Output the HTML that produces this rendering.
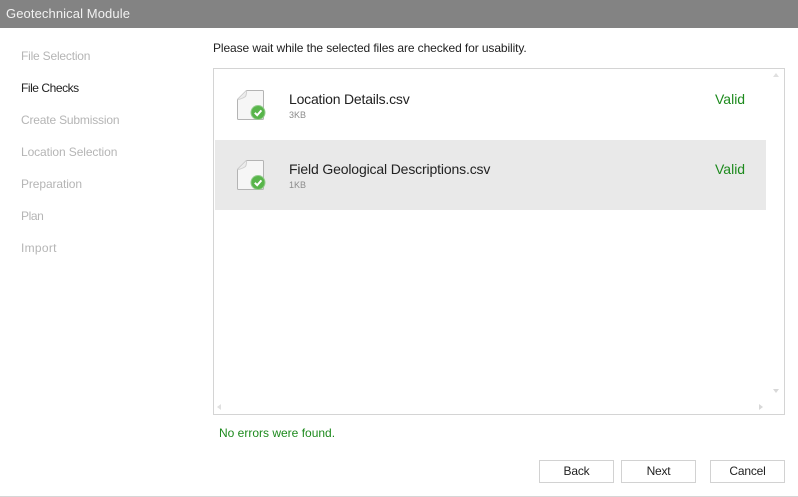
<!DOCTYPE html>
<html>
<head>
<meta charset="utf-8">
<style>
html,body{margin:0;padding:0;background:#fff;}
body{width:798px;height:497px;position:relative;overflow:hidden;font-family:"Liberation Sans",sans-serif;}
.t{position:absolute;white-space:nowrap;line-height:16px;}
.nav{left:21px;font-size:12px;color:#b5b5b5;}
.btn{position:absolute;top:460px;height:23px;box-sizing:border-box;border:1px solid #d2d2d2;background:#fff;text-align:center;font-size:12px;line-height:21px;color:#222;letter-spacing:-0.2px;}
.abs{position:absolute;}
</style>
</head>
<body>
<div class="abs" style="left:0;top:0;width:798px;height:28px;background:#838383"></div>
<div class="t" style="left:6px;top:6px;font-size:13px;color:#f2f2f2;letter-spacing:0.1px">Geotechnical Module</div>

<div class="t nav" style="top:48px;letter-spacing:-0.2px">File Selection</div>
<div class="t nav" style="top:80px;color:#222;letter-spacing:-0.45px">File Checks</div>
<div class="t nav" style="top:112px;letter-spacing:-0.18px">Create Submission</div>
<div class="t nav" style="top:144px;letter-spacing:-0.1px">Location Selection</div>
<div class="t nav" style="top:176px;letter-spacing:-0.1px">Preparation</div>
<div class="t nav" style="top:208px;letter-spacing:-0.4px">Plan</div>
<div class="t nav" style="top:240px;letter-spacing:0.3px">Import</div>

<div class="t" style="left:213px;top:40px;font-size:12px;color:#222;letter-spacing:-0.1px">Please wait while the selected files are checked for usability.</div>

<div class="abs" style="left:213px;top:68px;width:572px;height:347px;box-sizing:border-box;border:1px solid #d4d4d4"></div>
<div class="abs" style="left:215px;top:140px;width:551px;height:70px;background:#e9e9e9"></div>

<svg class="abs" style="left:230px;top:84px" width="40" height="40" viewBox="0 0 40 40">
<path d="M16.500 6.500H32.500Q33.500 6.500 33.500 7.500V34.500Q33.500 35.500 32.500 35.500H8.500Q7.500 35.500 7.500 34.500V15.500Z" fill="#f6f6f6" stroke="#b4b4b4"/>
<path d="M16.500 6.500Q16.800 10 15.500 12.500Q12 15 7.500 15.500" fill="#ececec" stroke="#d0d0d0"/>
<circle cx="28" cy="28.500" r="7" fill="#58b54a" stroke="#93cc8c"/>
<path d="M24.800 28.800L27.200 31.200L31.400 26.400" fill="none" stroke="#fff" stroke-width="2"/>
</svg>
<svg class="abs" style="left:230px;top:154px" width="40" height="40" viewBox="0 0 40 40">
<path d="M16.500 6.500H32.500Q33.500 6.500 33.500 7.500V34.500Q33.500 35.500 32.500 35.500H8.500Q7.500 35.500 7.500 34.500V15.500Z" fill="#f6f6f6" stroke="#b4b4b4"/>
<path d="M16.500 6.500Q16.800 10 15.500 12.500Q12 15 7.500 15.500" fill="#ececec" stroke="#d0d0d0"/>
<circle cx="28" cy="28.500" r="7" fill="#58b54a" stroke="#93cc8c"/>
<path d="M24.800 28.800L27.200 31.200L31.400 26.400" fill="none" stroke="#fff" stroke-width="2"/>
</svg>

<div class="t" style="left:289px;top:91px;font-size:14px;color:#222;letter-spacing:-0.2px">Location Details.csv</div>
<div class="t" style="left:289px;top:107px;font-size:9px;color:#8c8c8c">3KB</div>
<div class="t" style="left:715px;top:91px;font-size:14px;color:#1d8a1d">Valid</div>

<div class="t" style="left:289px;top:161px;font-size:14px;color:#222;letter-spacing:-0.15px">Field Geological Descriptions.csv</div>
<div class="t" style="left:289px;top:177px;font-size:9px;color:#8c8c8c">1KB</div>
<div class="t" style="left:715px;top:161px;font-size:14px;color:#1d8a1d">Valid</div>

<svg class="abs" style="left:770px;top:70px" width="12" height="10"><path d="M3 7L6 3L9 7Z" fill="#e0e0e0"/></svg>
<svg class="abs" style="left:770px;top:386px" width="12" height="10"><path d="M3 3L9 3L6 7Z" fill="#d8d8d8"/></svg>
<svg class="abs" style="left:215px;top:401px" width="10" height="12"><path d="M6 3V9L2 6Z" fill="#e0e0e0"/></svg>
<svg class="abs" style="left:756px;top:401px" width="10" height="12"><path d="M3 3V9L7 6Z" fill="#d8d8d8"/></svg>

<div class="t" style="left:219px;top:425px;font-size:12px;color:#1d8a1d">No errors were found.</div>

<div class="btn" style="left:539px;width:75px">Back</div>
<div class="btn" style="left:621px;width:75px">Next</div>
<div class="btn" style="left:710px;width:75px">Cancel</div>

<div class="abs" style="left:0;top:496px;width:798px;height:1px;background:#d6d6d6"></div>
</body>
</html>
